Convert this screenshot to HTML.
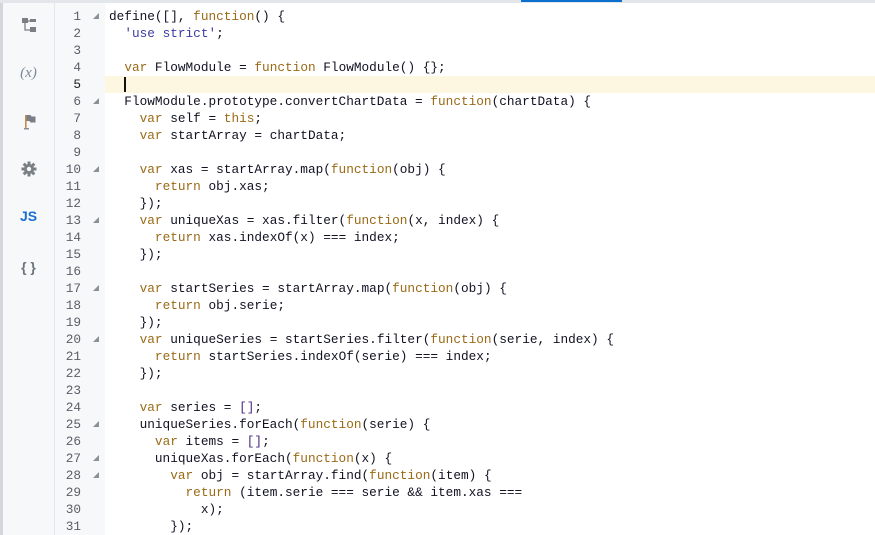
<!DOCTYPE html>
<html><head><meta charset="utf-8"><style>
*{margin:0;padding:0;box-sizing:border-box}
body{width:875px;height:535px;overflow:hidden;background:#fff;position:relative;font-family:"Liberation Sans",sans-serif}
#top{position:absolute;left:0;top:0;width:875px;height:3px;background:#e3e7eb}
#topb{position:absolute;left:521px;top:0;width:101px;height:2px;background:#0b6fce}
#side{position:absolute;left:0;top:3px;width:55px;height:532px;background:#f7f8fa;border-left:3px solid #d3d6da;border-right:1px solid #e3e6ea}
#gut{position:absolute;left:55px;top:3px;width:50px;height:532px;background:#f7f8fa}
.ic{position:absolute;left:0;width:51px;text-align:center;color:#7a7f85}
#code{position:absolute;left:0;top:8px;font-family:"Liberation Mono",monospace;font-size:12.75px}
.l{height:17px;line-height:17px;position:relative;white-space:pre;width:875px}
.n{position:absolute;left:55px;width:26px;text-align:right;color:#5a5f66}
.f{position:absolute;left:93px;top:5px;width:0;height:0;border-left:6px solid transparent;border-bottom:6px solid #8a9096}
.c{position:absolute;left:109px;color:#111122}
.k{color:#9a6a16}.s{color:#3c3ca8}.p{color:#4a2a80}
.hl{background:#fdf6e0}
</style></head><body>
<div id="top"></div><div id="topb"></div>
<div id="side">
<svg style="position:absolute;top:14px;left:18px;width:16px;height:16px" viewBox="0 0 16 16"><rect x="1" y="1" width="6" height="5" fill="#7a7f85"/><rect x="9" y="2" width="6" height="3" fill="#7a7f85"/><rect x="9" y="10" width="6" height="5" fill="#7a7f85"/><path d="M4 6v7h5M4 4h5" stroke="#7a7f85" stroke-width="1.3" fill="none"/></svg>
<div class="ic" style="top:62px;font-family:'Liberation Serif',serif;font-style:italic;font-size:15px;color:#7d8a9a">(<i>x</i>)</div>
<svg style="position:absolute;top:110px;left:20px;width:14px;height:18px" viewBox="0 0 14 18"><rect x="2" y="2" width="1.6" height="13" fill="#c98a50"/><rect x="1" y="15" width="5" height="1.5" fill="#8a8f95"/><path d="M3.5 2h4l1 1.5h4v6h-5l-1-1.5h-3z" fill="#7a7f85"/></svg>
<svg style="position:absolute;top:158px;left:18px;width:16px;height:16px" viewBox="0 0 16 16"><g fill="#7a7f85"><circle cx="8" cy="8" r="5"/><rect x="6.5" y="0.5" width="3" height="15"/><rect x="0.5" y="6.5" width="15" height="3"/><rect x="6.5" y="0.5" width="3" height="15" transform="rotate(45 8 8)"/><rect x="6.5" y="0.5" width="3" height="15" transform="rotate(-45 8 8)"/></g><circle cx="8" cy="8" r="2.2" fill="#f7f8fa"/></svg>
<div class="ic" style="top:205px;font-weight:bold;font-size:14px;color:#1a6fcf">JS</div>
<div class="ic" style="top:256px;font-weight:bold;font-size:14px;color:#6d737a">{ }</div>
</div>
<div id="gut"></div>
<div id="code">
<div class="l"><span class="n">1</span><span class="f"></span><span class="c">define([], <span class="k">function</span>() {</span></div>
<div class="l"><span class="n">2</span><span class="c">  <span class="s">'use strict'</span>;</span></div>
<div class="l"><span class="n">3</span></div>
<div class="l"><span class="n">4</span><span class="c">  <span class="k">var</span> FlowModule = <span class="k">function</span> FlowModule() {};</span></div>
<div class="l"><span class="n" style="color:#222">5</span><div class="hl" style="position:absolute;left:105px;top:0;width:770px;height:17px"></div><span style="position:absolute;left:124px;top:1px;width:1.5px;height:15px;background:#111"></span></div>
<div class="l"><span class="n">6</span><span class="f"></span><span class="c">  FlowModule.prototype.convertChartData = <span class="k">function</span>(chartData) {</span></div>
<div class="l"><span class="n">7</span><span class="c">    <span class="k">var</span> self = <span class="k">this</span>;</span></div>
<div class="l"><span class="n">8</span><span class="c">    <span class="k">var</span> startArray = chartData;</span></div>
<div class="l"><span class="n">9</span></div>
<div class="l"><span class="n">10</span><span class="f"></span><span class="c">    <span class="k">var</span> xas = startArray.map(<span class="k">function</span>(obj) {</span></div>
<div class="l"><span class="n">11</span><span class="c">      <span class="k">return</span> obj.xas;</span></div>
<div class="l"><span class="n">12</span><span class="c">    });</span></div>
<div class="l"><span class="n">13</span><span class="f"></span><span class="c">    <span class="k">var</span> uniqueXas = xas.filter(<span class="k">function</span>(x, index) {</span></div>
<div class="l"><span class="n">14</span><span class="c">      <span class="k">return</span> xas.indexOf(x) === index;</span></div>
<div class="l"><span class="n">15</span><span class="c">    });</span></div>
<div class="l"><span class="n">16</span></div>
<div class="l"><span class="n">17</span><span class="f"></span><span class="c">    <span class="k">var</span> startSeries = startArray.map(<span class="k">function</span>(obj) {</span></div>
<div class="l"><span class="n">18</span><span class="c">      <span class="k">return</span> obj.serie;</span></div>
<div class="l"><span class="n">19</span><span class="c">    });</span></div>
<div class="l"><span class="n">20</span><span class="f"></span><span class="c">    <span class="k">var</span> uniqueSeries = startSeries.filter(<span class="k">function</span>(serie, index) {</span></div>
<div class="l"><span class="n">21</span><span class="c">      <span class="k">return</span> startSeries.indexOf(serie) === index;</span></div>
<div class="l"><span class="n">22</span><span class="c">    });</span></div>
<div class="l"><span class="n">23</span></div>
<div class="l"><span class="n">24</span><span class="c">    <span class="k">var</span> series = <span class="p">[]</span>;</span></div>
<div class="l"><span class="n">25</span><span class="f"></span><span class="c">    uniqueSeries.forEach(<span class="k">function</span>(serie) {</span></div>
<div class="l"><span class="n">26</span><span class="c">      <span class="k">var</span> items = <span class="p">[]</span>;</span></div>
<div class="l"><span class="n">27</span><span class="f"></span><span class="c">      uniqueXas.forEach(<span class="k">function</span>(x) {</span></div>
<div class="l"><span class="n">28</span><span class="f"></span><span class="c">        <span class="k">var</span> obj = startArray.find(<span class="k">function</span>(item) {</span></div>
<div class="l"><span class="n">29</span><span class="c">          <span class="k">return</span> (item.serie === serie &amp;&amp; item.xas ===</span></div>
<div class="l"><span class="n">30</span><span class="c">            x);</span></div>
<div class="l"><span class="n">31</span><span class="c">        });</span></div>
</div>
</body></html>
